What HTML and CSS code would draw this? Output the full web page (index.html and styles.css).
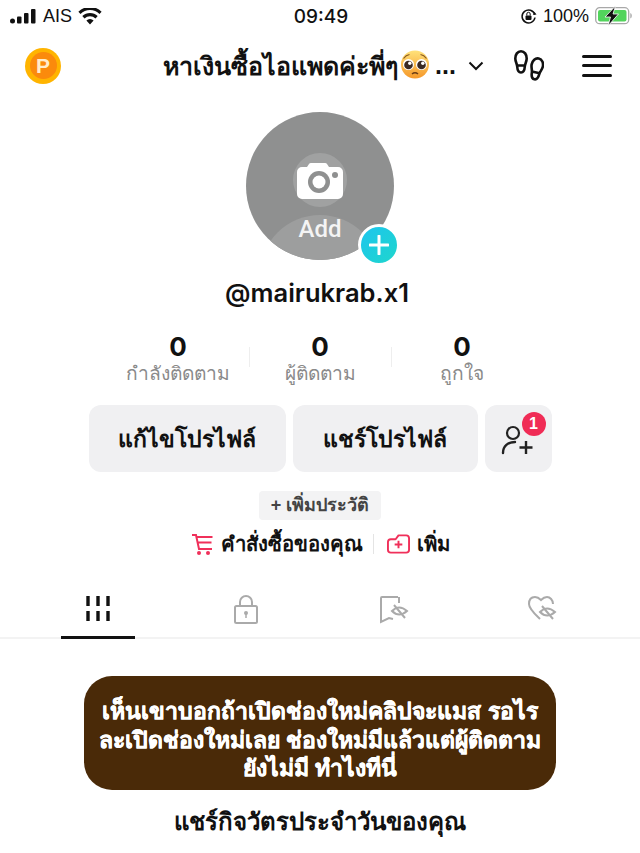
FILE: index.html
```html
<!DOCTYPE html>
<html>
<head lang="th">
    <meta charset="UTF-8">
    <title>Profile</title>
    <link rel="stylesheet" href="styles.css">
</head>
<body>
    <div class="status">
        <div class="status-left">
            <svg width="27" height="15" viewBox="0 0 27 15"><circle cx="2.500" cy="12" r="2.500" fill="#111"/><rect x="7" y="7.500" width="4.500" height="7" rx="1" fill="#111"/><rect x="14" y="4" width="4.500" height="10.500" rx="1" fill="#111"/><rect x="21" y="0" width="4.500" height="14.500" rx="1" fill="#111"/></svg>
            <span>AIS</span>
            <svg width="24" height="17" viewBox="0 0 24 17"><path d="M12 16.500l-3.600-4a5 5 0 0 1 7.200 0zM6.500 10.500l-2.200-2.400a11 11 0 0 1 15.400 0l-2.200 2.400a8 8 0 0 0-11 0zM2.500 6L.4 3.700a16.500 16.500 0 0 1 23.200 0L21.500 6a13.500 13.500 0 0 0-19 0z" fill="#111"/></svg>
        </div>
        <div class="status-time">09:49</div>
        <div class="status-right">
            <svg width="17" height="17" viewBox="0 0 17 17"><path d="M14.800 6.500A6.500 6.500 0 1 0 15 9.500" fill="none" stroke="#111" stroke-width="1.500"/><path d="M16.500 6.500l-3.500.5 1.500-3z" fill="#111"/><rect x="5.500" y="7.500" width="6" height="4.500" rx="1" fill="#111"/><path d="M6.800 7.500V6a1.700 1.700 0 0 1 3.400 0v1.500" fill="none" stroke="#111"/></svg>
            <span>100%</span>
            <svg width="37" height="20" viewBox="0 0 37 20"><rect x=".7" y="1.700" width="33" height="16" rx="4" fill="none" stroke="#a8a8a8" stroke-width="1.300"/><rect x="3" y="4" width="28.500" height="11.500" rx="2" fill="#52d45c"/><path d="M35.300 7v5.500c1-.4 1.500-1.500 1.500-2.700s-.5-2.400-1.500-2.800z" fill="#a8a8a8"/><path d="M20.500 0L10 11h5.500L13 20l10.500-12h-5.500z" fill="#111" stroke="#fff" stroke-width=".8"/></svg>
        </div>
    </div>

    <div class="nav">
        <div class="coin"><span>P</span></div>
        <div class="nav-title">
            <span class="nav-name">หาเงินซื้อไอแพดค่ะพี่ๆ</span>
            <svg class="emoji" width="28" height="29" viewBox="0 0 28 29"><defs><linearGradient id="face" x1="0" y1="0" x2="0" y2="1"><stop offset="0" stop-color="#ffe27a"/><stop offset="1" stop-color="#f5982a"/></linearGradient></defs><circle cx="14" cy="14.500" r="14" fill="url(#face)"/><circle cx="7.500" cy="14.500" r="5.500" fill="#fff"/><circle cx="20.500" cy="14.500" r="5.500" fill="#fff"/><circle cx="7.500" cy="15" r="4.300" fill="#3a2a24"/><circle cx="20.500" cy="15" r="4.300" fill="#3a2a24"/><circle cx="8.800" cy="13.300" r="1.700" fill="#fff"/><circle cx="21.800" cy="13.300" r="1.700" fill="#fff"/><path d="M2.500 8.500q2.500-3.500 6-4M25.500 8.500q-2.500-3.500-6-4" fill="none" stroke="#8a5a20" stroke-width="1.200"/><path d="M11 24q3-2.500 6 0" fill="none" stroke="#6b3d16" stroke-width="1.600"/></svg>
            <span class="nav-dots">...</span>
            <svg class="chev" width="16" height="10" viewBox="0 0 16 10"><path d="M1.500 1.500L8 8l6.500-6.500" fill="none" stroke="#111" stroke-width="2"/></svg>
        </div>
        <div class="nav-icons">
            <svg width="30" height="32" viewBox="0 0 30 32"><path d="M7 1.300C3.500 1.300 1.300 4.500 1.300 8.500c0 3 1.700 5 1.900 8 .2 3.500 1.700 6 3.800 6s3.600-2.500 3.800-6c.2-3 1.900-5 1.900-8 0-4-2.200-7.200-5.700-7.200zM3 15.500h8" fill="none" stroke="#111" stroke-width="2.600" stroke-linejoin="round"/><path d="M7 1.300C3.500 1.300 1.300 4.500 1.300 8.500c0 3 1.700 5 1.900 8 .2 3.500 1.700 6 3.800 6s3.600-2.500 3.800-6c.2-3 1.900-5 1.900-8 0-4-2.200-7.200-5.700-7.200zM3 15.500h8" transform="translate(15.500 7) rotate(12 7 12)" fill="none" stroke="#111" stroke-width="2.600" stroke-linejoin="round"/></svg>
            <div class="burger"><i></i><i></i><i></i></div>
        </div>
    </div>

    <div class="profile">
        <div class="avatar">
            <div class="avatar-clip">
                <div class="avatar-hill"></div>
                <div class="avatar-halo"></div>
            </div>
            <svg class="camera" width="46" height="36" viewBox="0 0 46 36"><path d="M5 4h5l2-3q.5-1 2-1h14q1.500 0 2 1l2 3h9a5 5 0 0 1 5 5v22a5 5 0 0 1-5 5H5a5 5 0 0 1-5-5V9a5 5 0 0 1 5-5z" fill="#fff"/><circle cx="22" cy="19" r="11" fill="#8f9090"/><circle cx="22" cy="19" r="6.500" fill="#fff"/><circle cx="38" cy="12" r="3" fill="#8f9090"/></svg>
            <span class="avatar-add">Add</span>
            <div class="avatar-plus"><svg width="20" height="20" viewBox="0 0 20 20"><path d="M10 1v18M1 10h18" stroke="#fff" stroke-width="3" stroke-linecap="round"/></svg></div>
        </div>
        <div class="handle">@mairukrab.x1</div>
    </div>

    <div class="stats">
        <div class="stat"><b>0</b><span>กำลังติดตาม</span></div>
        <div class="stat"><b>0</b><span>ผู้ติดตาม</span></div>
        <div class="stat"><b>0</b><span>ถูกใจ</span></div>
    </div>

    <div class="actions">
        <div class="btn btn-edit">แก้ไขโปรไฟล์</div>
        <div class="btn btn-share">แชร์โปรไฟล์</div>
        <div class="btn btn-add">
            <svg width="34" height="32" viewBox="0 0 34 32"><circle cx="12" cy="10" r="6" fill="none" stroke="#222" stroke-width="2.200"/><path d="M2 30c0-7 5-11 12-11" fill="none" stroke="#222" stroke-width="2.400" stroke-linecap="round"/><path d="M25 18v13M18.500 24.500h13" stroke="#222" stroke-width="2.400"/></svg>
            <span class="badge">1</span>
        </div>
    </div>

    <div class="bio-row"><span class="bio">+ เพิ่มประวัติ</span></div>

    <div class="links">
        <svg class="link-cart" width="22" height="22" viewBox="0 0 22 22"><path d="M1 2h4l3 14h13M5.500 4h16M6.500 9.500h14" fill="none" stroke="#f0305a" stroke-width="2"/><circle cx="8" cy="20" r="2" fill="#f0305a"/><circle cx="17" cy="20" r="2" fill="#f0305a"/></svg>
        <span class="link-text">คำสั่งซื้อของคุณ</span>
        <i class="link-sep"></i>
        <svg class="link-plus" width="23" height="20" viewBox="0 0 24 20"><path d="M4 5h5l3-4h8a3 3 0 0 1 3 3v12a3 3 0 0 1-3 3H4a3 3 0 0 1-3-3V8a3 3 0 0 1 3-3z" fill="none" stroke="#f0305a" stroke-width="2" stroke-linejoin="round"/><path d="M12 6.500v8M8 10.500h8" stroke="#f0305a" stroke-width="2"/></svg>
        <span class="link-text">เพิ่ม</span>
    </div>

    <div class="tabs">
        <div class="tab tab-on">
            <svg width="24" height="26" viewBox="0 0 24 26"><path d="M2 0v10M12 0v10M22 0v10M2 15v10M12 15v10M22 15v10" stroke="#111" stroke-width="3.400"/></svg>
        </div>
        <div class="tab">
            <svg width="26" height="30" viewBox="0 0 26 30"><rect x="2" y="11" width="22" height="17" rx="1.500" fill="none" stroke="#aaa" stroke-width="2"/><path d="M7 11V7a6 6 0 0 1 12 0v4" fill="none" stroke="#aaa" stroke-width="2"/><circle cx="13" cy="18" r="2" fill="#aaa"/><path d="M13 18v5" stroke="#aaa" stroke-width="1.500"/></svg>
        </div>
        <div class="tab">
            <svg width="30" height="30" viewBox="0 0 30 30"><path d="M19 2H3a1 1 0 0 0-1 1v24l8-4 4 1" fill="none" stroke="#aaa" stroke-width="2"/><path d="M20 2v6" stroke="#aaa" stroke-width="2"/><path d="M13 16q7-7 15 0q-8 7-15 0z" fill="none" stroke="#aaa" stroke-width="2"/><path d="M15 10l11 13" stroke="#aaa" stroke-width="2"/></svg>
        </div>
        <div class="tab">
            <svg width="30" height="28" viewBox="0 0 30 28"><path d="M26 9c0-4-3-7-6-7-3 0-5 2-6 3-1-1-3-3-6-3-4 0-6 3-6 7 0 5 7 11 11 15" fill="none" stroke="#aaa" stroke-width="2"/><path d="M13 17q7-7 15 0q-8 7-15 0z" fill="none" stroke="#aaa" stroke-width="2"/><path d="M15 11l11 13" stroke="#aaa" stroke-width="2"/></svg>
        </div>
    </div>

    <div class="promo">
        <div class="promo-box">เห็นเขาบอกถ้าเปิดช่องใหม่คลิปจะแมส รอไร<br>ละเปิดช่องใหม่เลย ช่องใหม่มีแล้วแต่ผู้ติดตาม<br>ยังไม่มี ทำไงทีนี่</div>
        <div class="promo-title">แชร์กิจวัตรประจำวันของคุณ</div>
    </div>
</body>
</html>
```

FILE: styles.css
```css
*{
    padding: 0;
    margin: 0;
    box-sizing: border-box;
}
body{
    width: 640px;
    height: 853px;
    overflow: hidden;
    background: #fff;
    color: #111;
    font-family: "Liberation Sans", "Noto Sans", "DejaVu Sans", sans-serif;
}
svg{
    display: block;
    flex: none;
}

/* status bar */
.status{
    height: 32px;
    display: flex;
    align-items: center;
    justify-content: space-between;
    padding: 0 8px 0 10px;
    font-size: 18px;
}
.status-left, .status-right{
    display: flex;
    align-items: center;
    gap: 6px;
    width: 200px;
}
.status-right{
    justify-content: flex-end;
}
.status-time{
    font-family: Inter, sans-serif;
    font-size: 19px;
    font-weight: 500;
}

/* top nav */
.nav{
    height: 67px;
    display: flex;
    align-items: center;
    padding: 0 28px 0 25px;
}
.coin{
    width: 36px;
    height: 36px;
    border-radius: 50%;
    background: #ffb400;
    display: flex;
    align-items: center;
    justify-content: center;
}
.coin span{
    width: 27px;
    height: 27px;
    border-radius: 50%;
    background: #fb8a0c;
    color: #ffeccb;
    font-size: 21px;
    font-weight: bold;
    line-height: 27px;
    text-align: center;
}
.nav-title{
    display: flex;
    align-items: center;
    margin-left: 102px;
    white-space: nowrap;
}
.emoji{
    margin-left: 3px;
    margin-top: -3px;
}
.nav-name{
    font-size: 25px;
    font-weight: bold;
}
.nav-dots{
    font-size: 25px;
    font-weight: bold;
    margin: 0 12px 0 6px;
}
.nav-icons{
    margin-left: auto;
    display: flex;
    align-items: center;
    gap: 38px;
}
.burger{
    width: 30px;
    display: flex;
    flex-direction: column;
    gap: 6.500px;
}
.burger i{
    display: block;
    height: 3px;
    background: #111;
    border-radius: 2px;
}

/* avatar */
.profile{
    display: flex;
    flex-direction: column;
    align-items: center;
    margin-top: 13px;
}
.avatar{
    width: 148px;
    height: 148px;
    position: relative;
}
.avatar-clip{
    width: 148px;
    height: 148px;
    border-radius: 50%;
    background: #8f9090;
    overflow: hidden;
    position: relative;
}
.avatar-hill{
    position: absolute;
    left: 14px;
    top: 103px;
    width: 120px;
    height: 120px;
    border-radius: 50%;
    background: #9d9e9e;
}
.avatar-halo{
    position: absolute;
    left: 47px;
    top: 41px;
    width: 54px;
    height: 54px;
    border-radius: 50%;
    background: #a0a1a1;
}
.camera{
    position: absolute;
    left: 51px;
    top: 51px;
}
.avatar-add{
    position: absolute;
    left: 0;
    right: 0;
    top: 103px;
    text-align: center;
    color: #f4f4f4;
    font-family: Roboto, sans-serif;
    font-size: 24px;
    font-weight: 500;
}
.avatar-plus{
    position: absolute;
    left: 112px;
    top: 112px;
    width: 42px;
    height: 42px;
    border-radius: 50%;
    border: 3px solid #fff;
    background: linear-gradient(135deg, #1cc5ee, #1fd6cc);
    display: flex;
    align-items: center;
    justify-content: center;
}
.handle{
    font-family: Inter, sans-serif;
    font-size: 25.500px;
    font-weight: 600;
    margin: 17px 6px 0 0;
    line-height: 32px;
}

/* counters */
.stats{
    display: flex;
    justify-content: center;
    margin-top: 24px;
}
.stat{
    width: 142px;
    display: flex;
    flex-direction: column;
    align-items: center;
    position: relative;
}
.stat + .stat::before{
    content: "";
    position: absolute;
    left: 0;
    top: 14px;
    height: 20px;
    width: 1px;
    background: #eee;
}
.stat b{
    font-family: Inter, sans-serif;
    font-size: 26px;
    line-height: 27px;
}
.stat span{
    font-size: 19.200px;
    line-height: 28px;
    color: #8a8a8a;
}

/* buttons */
.actions{
    display: flex;
    justify-content: center;
    gap: 7px;
    margin-top: 17px;
}
.btn{
    height: 67px;
    border-radius: 12px;
    background: #f0f0f2;
    font-size: 23px;
    font-weight: bold;
    display: flex;
    align-items: center;
    justify-content: center;
    white-space: nowrap;
    position: relative;
}
.btn-edit{
    width: 197px;
}
.btn-share{
    width: 185px;
}
.btn-add{
    width: 67px;
}
.badge{
    position: absolute;
    left: 37px;
    top: 7px;
    width: 24px;
    height: 24px;
    border-radius: 50%;
    background: #f02c56;
    color: #fff;
    font-size: 16px;
    font-weight: bold;
    line-height: 24px;
    text-align: center;
}

/* bio */
.bio-row{
    display: flex;
    justify-content: center;
    margin-top: 19px;
}
.bio{
    height: 29px;
    padding: 0 12px;
    border-radius: 4px;
    background: #f3f3f4;
    color: #444;
    font-size: 18px;
    font-weight: bold;
    line-height: 29px;
}
.links{
    display: flex;
    justify-content: center;
    align-items: center;
    height: 40px;
    margin-top: 4px;
}
.link-text{
    font-size: 20.300px;
    font-weight: bold;
}
.link-cart{
    margin-right: 8px;
}
.link-sep{
    width: 1px;
    height: 20px;
    background: #e4e4e4;
    margin: 0 13px 0 10px;
}
.link-plus{
    margin-right: 7px;
}

/* tabs */
.tabs{
    display: flex;
    justify-content: space-between;
    margin-top: 10px;
    padding: 0 61px;
    height: 65px;
    border-bottom: 2px solid #f3f3f3;
}
.tab{
    width: 74px;
    height: 65px;
    display: flex;
    justify-content: center;
    padding-top: 21px;
}
.tab-on{
    border-bottom: 3px solid #111;
}
.tab-on svg{
    margin-top: 1px;
}

/* banner */
.promo{
    display: flex;
    flex-direction: column;
    align-items: center;
    margin-top: 37px;
}
.promo-box{
    width: 472px;
    height: 114px;
    border-radius: 28px;
    background: #4a2a08;
    color: #fff;
    font-size: 23px;
    font-weight: bold;
    line-height: 28.500px;
    text-align: center;
    padding-top: 21px;
    white-space: nowrap;
    -webkit-text-stroke: .4px #fff;
}
.promo-title{
    font-size: 24px;
    font-weight: bold;
    margin-top: 12px;
}
```
